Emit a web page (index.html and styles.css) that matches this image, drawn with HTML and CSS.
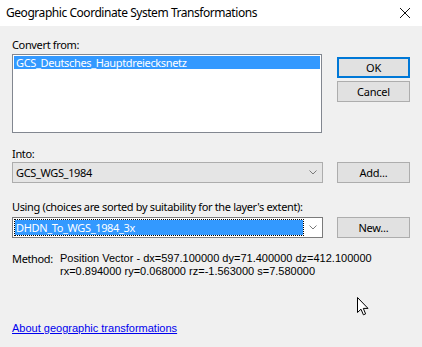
FILE: index.html
```html
<!DOCTYPE html>
<html lang="en">
<head>
    <meta charset="UTF-8">
    <meta name="viewport" content="width=device-width, initial-scale=1.0">
    <title>Geographic Coordinate System Transformations</title>
    <link rel="stylesheet" href="styles.css">
</head>
<body>
    <div class="window">
        <div class="titlebar">
            <span class="title">Geographic Coordinate System Transformations</span>
            <svg class="close" width="12" height="12" viewBox="0 0 12 12">
                <path d="M1 1L11 11M11 1L1 11" stroke="#111" stroke-width="1" fill="none"/>
            </svg>
        </div>

        <div class="dialog">
            <div class="row top-row">
                <div class="main-col">
                    <div class="field-label">Convert from:</div>
                    <div class="listbox">
                        <div class="list-item selected">GCS_Deutsches_Hauptdreiecksnetz</div>
                    </div>
                </div>
                <div class="side-col">
                    <button class="btn default-btn">OK</button>
                    <button class="btn">Cancel</button>
                </div>
            </div>

            <div class="field-label into-label">Into:</div>
            <div class="row">
                <div class="combo readonly">
                    <span class="combo-text">GCS_WGS_1984</span>
                    <svg class="chevron" width="8" height="5" viewBox="0 0 8 5"><path d="M0.5 0.5L4 4L7.5 0.5" stroke="#7a7a7a" fill="none"/></svg>
                </div>
                <button class="btn side-btn">Add...</button>
            </div>

            <div class="field-label using-label">Using (choices are sorted by suitability for the layer's extent):</div>
            <div class="row">
                <div class="combo editable">
                    <span class="combo-text picked">DHDN_To_WGS_1984_3x</span>
                    <svg class="chevron" width="8" height="5" viewBox="0 0 8 5"><path d="M0.5 0.5L4 4L7.5 0.5" stroke="#7a7a7a" fill="none"/></svg>
                </div>
                <button class="btn side-btn">New...</button>
            </div>

            <div class="method">
                <span class="method-label">Method:</span>
                <span class="method-value">Position Vector - dx=597.100000 dy=71.400000 dz=412.100000<br>rx=0.894000 ry=0.068000 rz=-1.563000 s=7.580000</span>
            </div>

            <a class="help-link" href="#">About geographic transformations</a>
        </div>

        <svg class="cursor" width="12" height="19" viewBox="0 0 12 19">
            <path d="M0.5 0.5L0.5 15.5L4 12.2L6.4 17.8L8.6 16.9L6.3 11.4L11 11.4Z" fill="#fff" stroke="#000" stroke-width="1" stroke-linejoin="miter"/>
        </svg>
    </div>
</body>
</html>
```

FILE: styles.css
```css
* {
    padding: 0;
    margin: 0;
    box-sizing: border-box;
}

body {
    width: 422px;
    height: 347px;
    background-color: #f0f0f0;
    font-family: "Noto Sans", Arial, sans-serif;
    font-size: 11px;
    letter-spacing: -0.35px;
    color: #000;
    overflow: hidden;
}

.window {
    position: relative;
    height: 347px;
}

.titlebar {
    height: 26px;
    background: #fff;
    display: flex;
    align-items: center;
    justify-content: space-between;
    padding: 0 11px 0 6px;
}

.title {
    font-size: 12px;
    letter-spacing: -0.45px;
    line-height: 26px;
    color: #000;
}

.close {
    display: block;
}

.dialog {
    padding: 11px 12px 0 12px;
}

.row {
    display: flex;
    gap: 15px;
}

.main-col {
    width: 311px;
}

.side-col {
    width: 73px;
    display: flex;
    flex-direction: column;
    gap: 3px;
    padding-top: 20px;
}

.field-label {
    height: 16px;
    line-height: 16px;
}

.listbox {
    margin-top: 1px;
    height: 79px;
    background: #fff;
    border: 1px solid #828790;
    padding: 1px;
}

.list-item {
    height: 13px;
    line-height: 13px;
    padding-left: 2px;
}

.selected {
    background: #3399ff;
    color: #fff;
}

.btn {
    width: 73px;
    height: 21px;
    background: #e1e1e1;
    border: 1px solid #adadad;
    font-family: "Noto Sans", Arial, sans-serif;
    font-size: 11px;
    letter-spacing: -0.2px;
    color: #000;
}

.default-btn {
    border: 2px solid #0078d7;
}

.side-btn {
    margin-left: -1px;
}

.into-label {
    margin-top: 13px;
}

.using-label {
    margin-top: 16px;
    margin-bottom: 2px;
}

.combo {
    width: 311px;
    height: 21px;
    display: flex;
    align-items: center;
    justify-content: space-between;
    border: 1px solid #adadad;
    padding: 0 5px 0 2px;
}

.readonly {
    background: #e5e5e5;
    padding-left: 3px;
}

.editable {
    background: #fff;
    border-color: #7a7a7a;
}

.combo-text {
    line-height: 15px;
}

.picked {
    background: #3399ff;
    color: #fff;
    width: 288px;
    height: 15px;
    padding-left: 1px;
    outline: 1px dotted #000;
}

.chevron {
    display: block;
}

.method {
    display: flex;
    margin-top: 14px;
    line-height: 13px;
}

.method-label {
    width: 48px;
}

.method-value {
    font-family: "Liberation Sans", Arial, sans-serif;
    font-size: 11px;
    letter-spacing: 0;
}

.help-link {
    display: inline-block;
    margin-top: 42px;
    line-height: 16px;
    font-family: "Liberation Sans", Arial, sans-serif;
    font-size: 11px;
    letter-spacing: 0;
    color: #0000ee;
    text-decoration: underline;
}

.cursor {
    position: absolute;
    left: 357px;
    top: 297px;
}
```
